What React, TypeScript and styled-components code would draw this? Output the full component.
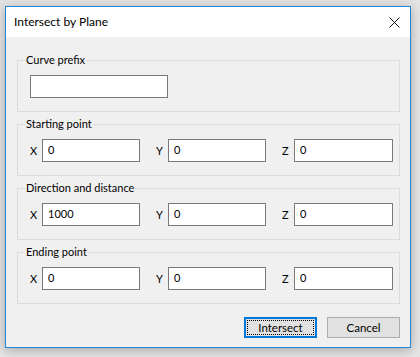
import styled, { createGlobalStyle } from 'styled-components';

const GlobalStyle = createGlobalStyle`
	body {
		margin: 0;
		background: #e4e4e4;
		font-family: Lato, 'Liberation Sans', sans-serif;
		font-size: 11px;
	}
`;

const coordRows = [
	{ title: 'Starting point', values: ['0', '0', '0'] },
	{ title: 'Direction and distance', values: ['1000', '0', '0'] },
	{ title: 'Ending point', values: ['0', '0', '0'] },
];

const axes = ['X', 'Y', 'Z'];

const CloseIcon = () => (
	<svg width='11' height='11' viewBox='0 0 11 11'>
		<path d='M0.5 0.5 L10.5 10.5 M10.5 0.5 L0.5 10.5' stroke='#111' strokeWidth='1' fill='none' />
	</svg>
);

const App = () => {
	return (
		<>
			<GlobalStyle />
			<Desktop>
				<Window>
					<TitleBar>
						<Title>Intersect by Plane</Title>
						<CloseButton>
							<CloseIcon />
						</CloseButton>
					</TitleBar>
					<Body>
						<Group>
							<Legend>Curve prefix</Legend>
							<Row>
								<TextBox $width={138} defaultValue='' />
							</Row>
						</Group>
						{coordRows.map(group => (
							<Group key={group.title}>
								<Legend>{group.title}</Legend>
								<Row>
									{axes.map((axis, i) => (
										<Field key={axis}>
											<AxisLabel>{axis}</AxisLabel>
											<TextBox $width={axis === 'Z' ? 99 : 98} defaultValue={group.values[i]} />
										</Field>
									))}
								</Row>
							</Group>
						))}
						<Buttons>
							<Button $primary>
								<FocusRing>Intersect</FocusRing>
							</Button>
							<Button>Cancel</Button>
						</Buttons>
					</Body>
				</Window>
			</Desktop>
		</>
	);
};

export default App;

const Desktop = styled.div`
	padding: 6px 0 0 5px;
	width: 420px;
	height: 357px;
	box-sizing: border-box;
`;

const Window = styled.div`
	width: 406px;
	height: 342px;
	box-sizing: border-box;
	border: 1px solid #1c86d9;
	background: #f0f0f0;
	box-shadow: 0 2px 10px rgba(0, 0, 0, 0.28);
	display: flex;
	flex-direction: column;
`;

const TitleBar = styled.div`
	height: 30px;
	background: #ffffff;
	display: flex;
	align-items: center;
	justify-content: space-between;
	padding: 0 10px 0 8px;
	flex-shrink: 0;
`;

const Title = styled.span`
	color: #000;
	font-size: 12px;
	margin-top: -1px;
`;

const CloseButton = styled.div`
	display: flex;
	align-items: center;
`;

const Body = styled.div`
	display: flex;
	flex-direction: column;
	padding: 23px 10px 0 11px;
	gap: 12px;
`;

const Group = styled.div`
	position: relative;
	border: 1px solid #dcdcdc;
	padding: 14px 0 13px 12px;
`;

const Legend = styled.span`
	position: absolute;
	top: -9px;
	left: 7px;
	padding: 0 1px;
	background: #f0f0f0;
	color: #000;
	font-size: 11px;
	line-height: 16px;
`;

const Row = styled.div`
	display: flex;
	gap: 16px;
`;

const Field = styled.div`
	display: flex;
	align-items: center;
`;

const AxisLabel = styled.span`
	width: 12px;
	color: #000;
	font-size: 11px;
`;

const TextBox = styled.input<{ $width: number }>`
	width: ${p => p.$width}px;
	height: 23px;
	box-sizing: border-box;
	border: 1px solid #7a7a7a;
	background: #fff;
	padding: 0 0 3px 5px;
	font-family: inherit;
	font-size: 11px;
	color: #000;
	outline: none;
`;

const Buttons = styled.div`
	display: flex;
	justify-content: flex-end;
	gap: 10px;
	margin-top: 1px;
`;

const Button = styled.div<{ $primary?: boolean }>`
	width: 73px;
	height: 21px;
	box-sizing: border-box;
	display: flex;
	align-items: center;
	justify-content: center;
	background: #e1e1e1;
	border: ${p => (p.$primary ? '2px solid #0078d7' : '1px solid #adadad')};
	color: #000;
	font-size: 11.5px;
	padding: ${p => (p.$primary ? '1px' : '0')};
`;

const FocusRing = styled.span`
	flex: 1;
	align-self: stretch;
	display: flex;
	align-items: center;
	justify-content: center;
	border: 1px dotted #000;
`;
